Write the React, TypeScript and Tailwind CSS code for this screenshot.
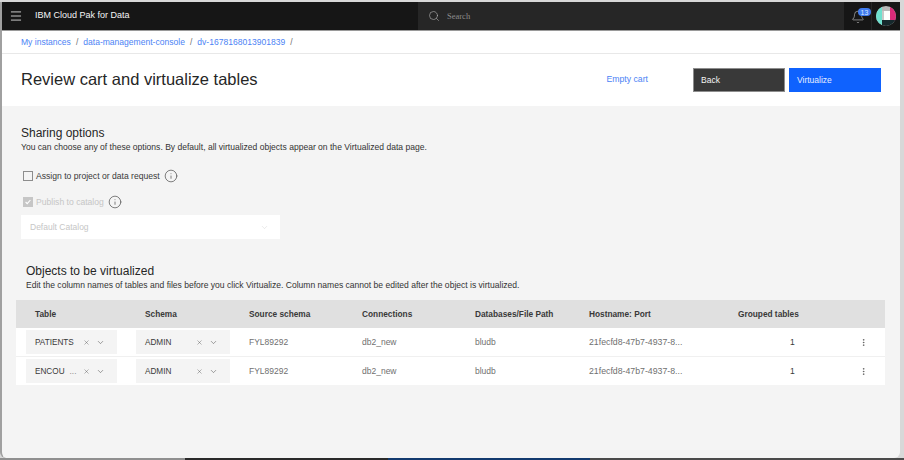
import { Bell, ChevronDown, Info, Menu, MoreVertical, Search, X } from 'lucide-react'

const sans = "font-['Liberation_Sans',Arial,sans-serif]"

const rows = [
  { table: 'PATIENTS', truncated: false },
  { table: 'ENCOU', truncated: true },
]

function TopBar() {
  return (
    <header className="flex h-[29px] shrink-0 items-stretch border-b border-[#9a9a9a] bg-[#161616]">
      <div className="flex w-[416px] items-center pl-[7px]">
        <Menu className="h-[14px] w-[14px] text-[#e0e0e0]" strokeWidth={1.5} />
        <span className="ml-[12px] text-[9px] text-[#f4f4f4]">IBM Cloud Pak for Data</span>
      </div>
      <div className="flex flex-1 items-center bg-[#262626] pl-[10px]">
        <Search className="h-[12px] w-[12px] text-[#b0b0b0]" strokeWidth={1.25} />
        <span className="ml-[7px] font-['Liberation_Serif',serif] text-[8.5px] text-[#8d8d8d]">Search</span>
      </div>
      <div className="relative flex w-[28px] items-center justify-center border-r border-[#262626]">
        <Bell className="mt-[2px] h-[14px] w-[14px] text-[#d0d0d0]" strokeWidth={1} />
        <span className="absolute left-[14px] top-[6px] flex h-[8px] w-[13px] items-center justify-center rounded-full bg-[#3f7bf0] text-[7px] leading-none text-[#dbe7ff]">13</span>
      </div>
      <div className="flex w-[28px] items-center justify-center">
        <svg viewBox="0 0 20 20" className="h-[20px] w-[20px]">
          <defs>
            <clipPath id="avatar-clip">
              <circle cx="10" cy="10" r="10" />
            </clipPath>
          </defs>
          <g clipPath="url(#avatar-clip)">
            <rect width="20" height="20" fill="#b9b9b9" />
            <rect width="6" height="20" fill="#6fe0cf" />
            <rect x="14" width="6" height="15" fill="#d92a78" />
            <rect x="6" y="14" width="14" height="6" fill="#15282c" />
            <rect x="6" y="5" width="8" height="9" fill="#ffffff" />
            <rect x="6" y="5" width="2" height="9" fill="#c9c9c9" />
          </g>
        </svg>
      </div>
    </header>
  )
}

function PageHeader() {
  return (
    <div className="shrink-0 bg-white">
      <nav className="flex h-[23px] items-center gap-[5px] border-b border-[#e8e8e8] pl-[19px] text-[8.55px] text-[#6f6f6f]">
        <span className="text-[#4b83f5]">My instances</span>
        <span>/</span>
        <span className="text-[#4b83f5]">data-management-console</span>
        <span>/</span>
        <span className="text-[#4b83f5]">dv-1678168013901839</span>
        <span>/</span>
      </nav>
      <div className="flex h-[52px] items-center pl-[19px] pr-[19px]">
        <h1 className="mb-[2px] flex-1 text-[16.5px] text-[#262626]">Review cart and virtualize tables</h1>
        <span className="mr-[45px] text-[8.7px] text-[#4b83f5]">Empty cart</span>
        <button className="mr-[4px] flex h-[24px] w-[92px] items-center border border-[#8d8d8d] bg-[#393939] pl-[7px] text-[8.5px] text-[#f4f4f4]">Back</button>
        <button className="flex h-[24px] w-[92px] items-center bg-[#0f62fe] pl-[8px] text-[8.5px] text-[#e6eeff]">Virtualize</button>
      </div>
    </div>
  )
}

function SharingOptions() {
  return (
    <section className="pl-[19px] pt-[20px]">
      <h2 className="text-[12px] leading-[15px] text-[#262626]">Sharing options</h2>
      <p className="mt-[1px] text-[8.55px] leading-[11px] text-[#333333]">You can choose any of these options. By default, all virtualized objects appear on the Virtualized data page.</p>
      <div className="mt-[17px] flex h-[12px] items-center">
        <span className="ml-[2px] h-[10px] w-[10px] border border-[#8d8d8d]" />
        <span className="ml-[3px] text-[8.6px] text-[#393939]">Assign to project or data request</span>
        <Info className="ml-[4px] h-[14px] w-[14px] text-[#525252]" strokeWidth={1.25} />
      </div>
      <div className="mt-[14px] flex h-[12px] items-center">
        <span className="ml-[2px] flex h-[10px] w-[10px] items-center justify-center bg-[#c6c6c6]">
          <svg viewBox="0 0 10 10" className="h-[8px] w-[8px]">
            <path d="M2 5l2 2 4-4.5" fill="none" stroke="#ffffff" strokeWidth="1.4" />
          </svg>
        </span>
        <span className="ml-[3px] text-[8.6px] text-[#c6c6c6]">Publish to catalog</span>
        <Info className="ml-[4px] h-[14px] w-[14px] text-[#525252]" strokeWidth={1.25} />
      </div>
      <div className="mt-[7px] flex h-[24px] w-[259px] items-center justify-between bg-white pl-[9px] pr-[11px] text-[8.5px] text-[#c6c6c6]">
        <span>Default Catalog</span>
        <ChevronDown className="h-[9px] w-[9px]" strokeWidth={1} />
      </div>
    </section>
  )
}

function Picker({ width, label, truncated, gap }: { width: string; label: string; truncated?: boolean; gap: string }) {
  return (
    <div className={`flex h-[24px] items-center bg-[#f4f4f4] pl-[9px] text-[8.2px] ${width}`}>
      <span className="pt-[2px] text-[#393939]">{label}</span>
      {truncated && <span className="ml-[5px] pt-[2px] text-[#8d8d8d]">...</span>}
      <X className={`h-[7px] w-[7px] text-[#393939] ${gap}`} strokeWidth={1.25} />
      <ChevronDown className="ml-[6px] h-[9px] w-[9px] text-[#393939]" strokeWidth={1.25} />
    </div>
  )
}

const grid = 'grid grid-cols-[119px_114px_113px_113px_114px_149px_100px_47px]'

function ObjectsTable() {
  return (
    <div className="ml-[14px] mr-[15px] mt-[9px]">
      <div className={`${grid} h-[28px] items-center bg-[#e0e0e0] text-[8.3px] font-bold text-[#393939]`}>
        <span className="pl-[19px]">Table</span>
        <span className="pl-[10px]">Schema</span>
        <span>Source schema</span>
        <span>Connections</span>
        <span>Databases/File Path</span>
        <span>Hostname: Port</span>
        <span>Grouped tables</span>
        <span />
      </div>
      {rows.map((row, i) => (
        <div key={row.table} className={`${grid} items-center bg-white text-[8.5px] text-[#6f6f6f] ${i === 0 ? 'h-[29px] border-b border-[#f0f0f0]' : 'h-[28px]'}`}>
          <div className="pl-[10px]">
            <Picker width="w-[91px]" label={row.table} truncated={row.truncated} gap={row.truncated ? 'ml-[7px]' : 'ml-[9px]'} />
          </div>
          <div className="pl-[1px]">
            <Picker width="w-[94px]" label="ADMIN" gap="ml-[25px]" />
          </div>
          <span className="pt-[1px]">FYL89292</span>
          <span className="pt-[1px]">db2_new</span>
          <span className="pt-[1px]">bludb</span>
          <span className="pt-[1px] text-[8.75px]">21fecfd8-47b7-4937-8...</span>
          <span className="pl-[52px] pt-[1px] text-[#393939]">1</span>
          <span className="flex pl-[21px] pt-[1px]">
            <MoreVertical className="h-[9px] w-[9px] text-[#393939]" strokeWidth={1.5} />
          </span>
        </div>
      ))}
    </div>
  )
}

export default function App() {
  return (
    <div className={`${sans} flex h-[460px] w-[904px] flex-col overflow-hidden bg-[#d8d8d8]`}>
      <div className="flex min-h-0 flex-1 flex-col pr-[4px] pt-[2px]">
        <div className="flex min-h-0 flex-1 flex-col overflow-hidden rounded-b-[6px] border-l-2 border-[#a0a0a0] bg-[#f4f4f4]">
          <TopBar />
          <PageHeader />
          <SharingOptions />
          <section className="pl-[24px] pt-[25px]">
            <h2 className="text-[12px] leading-[14px] text-[#262626]">Objects to be virtualized</h2>
            <p className="mt-[2px] text-[8.55px] leading-[11px] text-[#333333]">Edit the column names of tables and files before you click Virtualize. Column names cannot be edited after the object is virtualized.</p>
          </section>
          <ObjectsTable />
        </div>
      </div>
      <div className="flex h-[2px] shrink-0">
        <div className="w-[185px] bg-[#8f8f8f]" />
        <div className="w-[203px] bg-[#2a2a2a]" />
        <div className="w-[202px] bg-[#123a6e]" />
        <div className="flex-1 bg-[#4a4a4a]" />
      </div>
    </div>
  )
}
